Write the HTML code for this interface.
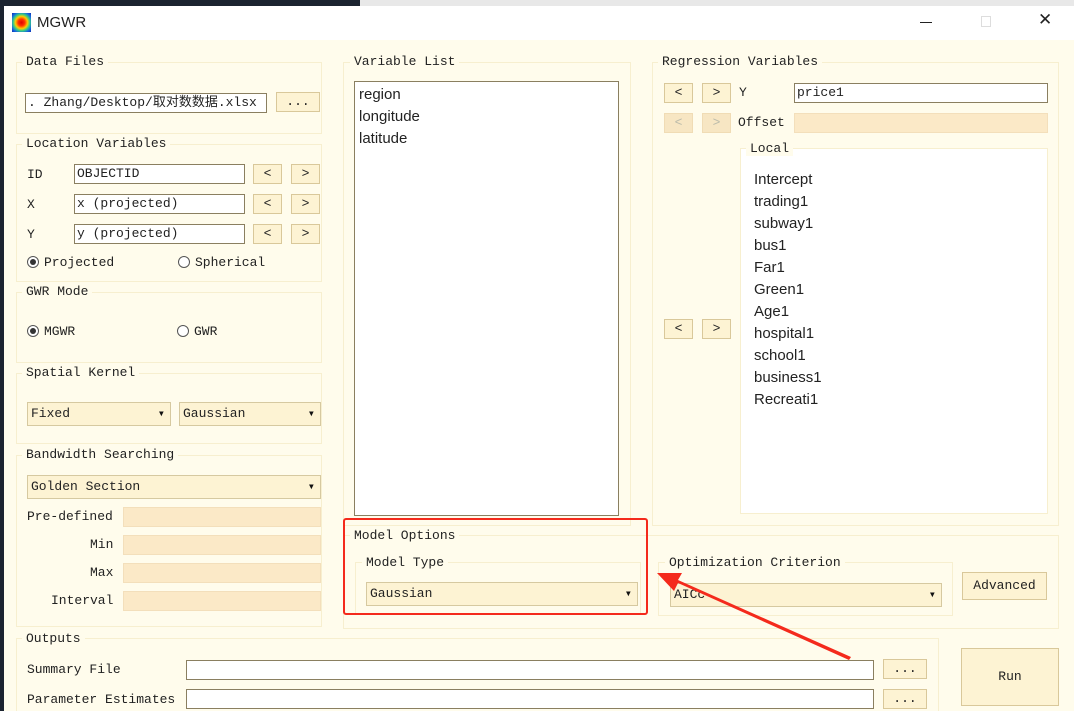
<!DOCTYPE html>
<html><head><meta charset="utf-8"><style>
*{box-sizing:border-box;margin:0;padding:0}
html,body{width:1074px;height:711px;overflow:hidden}
body{background:#1b2330;position:relative;font-family:"Liberation Mono","Noto Sans CJK SC",monospace;font-size:13px;color:#222}
.a{position:absolute}
.win{left:4px;top:6px;width:1070px;height:705px;background:#fffcec}
.tb{left:4px;top:6px;width:1070px;height:34px;background:#fff}
.grp{position:absolute;border:1px solid #f7efcf}
.lg{position:absolute;background:#fffcec;padding:0 4px;font-size:13px;line-height:14px;white-space:nowrap}
.in{position:absolute;background:#fff;border:1px solid #8a7f60;height:20px;font-size:13px;line-height:18px;padding-left:2px;white-space:nowrap;overflow:hidden}
.dis{position:absolute;background:#fbe9c7;border:1px solid #f3dfbb;height:20px}
.bt{position:absolute;background:#fdf3d3;border:1px solid #d9c89a;height:20px;text-align:center;line-height:17px;font-size:13px}
.sel{position:absolute;background:#fdf3d3;border:1px solid #d6c9a0;height:24px;line-height:22px;padding-left:3px;font-size:13px}
.sel:after{content:"▾";position:absolute;right:5px;top:0;font-size:12px;color:#111}
.t{position:absolute;font-size:13px;line-height:14px;white-space:nowrap}
.rad{display:inline-block;width:12px;height:12px;border:1px solid #555;border-radius:50%;vertical-align:-2px;margin-right:5px;position:relative;background:#fff}
.rad.on:after{content:"";position:absolute;left:2px;top:2px;width:6px;height:6px;border-radius:50%;background:#333}
.list{position:absolute;font-family:"Liberation Sans",sans-serif;font-size:15px;line-height:22px}
</style></head><body>
<div class="a" style="left:360px;top:0;width:714px;height:6px;background:#e8e8e8"></div>
<div class="a win"></div>
<div class="a tb"></div>
<div class="a" style="left:12px;top:13px;width:19px;height:19px;background:radial-gradient(circle,#d00 0,#f30 25%,#fc0 45%,#3c8 62%,#1466e0 80%,#1030b0 100%)"></div>
<div class="t" style="left:37px;top:15px;font-family:'Liberation Sans',sans-serif;font-size:15px;line-height:16px">MGWR</div>
<div class="a" style="left:920px;top:22px;width:12px;height:1px;background:#222"></div>
<div class="a" style="left:981px;top:16px;width:10px;height:11px;border:1px solid #ddd"></div>
<div class="t" style="left:1038px;top:13px;font-family:'Liberation Sans';font-size:17px">✕</div>

<div class="grp" style="left:16px;top:62px;width:306px;height:72px"></div>
<div class="lg" style="left:22px;top:55px">Data Files</div>
<div class="in" style="left:25px;top:93px;width:242px">. Zhang/Desktop/取对数数据.xlsx</div>
<div class="bt" style="left:276px;top:92px;width:44px">...</div>

<div class="grp" style="left:16px;top:144px;width:306px;height:138px"></div>
<div class="lg" style="left:22px;top:137px">Location Variables</div>
<div class="t" style="left:27px;top:168px">ID</div>
<div class="in" style="left:74px;top:164px;width:171px">OBJECTID</div>
<div class="bt" style="left:253px;top:164px;width:29px">&lt;</div><div class="bt" style="left:291px;top:164px;width:29px">&gt;</div>
<div class="t" style="left:27px;top:198px">X</div>
<div class="in" style="left:74px;top:194px;width:171px">x (projected)</div>
<div class="bt" style="left:253px;top:194px;width:29px">&lt;</div><div class="bt" style="left:291px;top:194px;width:29px">&gt;</div>
<div class="t" style="left:27px;top:228px">Y</div>
<div class="in" style="left:74px;top:224px;width:171px">y (projected)</div>
<div class="bt" style="left:253px;top:224px;width:29px">&lt;</div><div class="bt" style="left:291px;top:224px;width:29px">&gt;</div>
<div class="t" style="left:27px;top:256px"><span class="rad on"></span>Projected</div>
<div class="t" style="left:178px;top:256px"><span class="rad"></span>Spherical</div>

<div class="grp" style="left:16px;top:292px;width:306px;height:71px"></div>
<div class="lg" style="left:22px;top:285px">GWR Mode</div>
<div class="t" style="left:27px;top:325px"><span class="rad on"></span>MGWR</div>
<div class="t" style="left:177px;top:325px"><span class="rad"></span>GWR</div>

<div class="grp" style="left:16px;top:373px;width:306px;height:71px"></div>
<div class="lg" style="left:22px;top:366px">Spatial Kernel</div>
<div class="sel" style="left:27px;top:402px;width:144px">Fixed</div>
<div class="sel" style="left:179px;top:402px;width:142px">Gaussian</div>

<div class="grp" style="left:16px;top:455px;width:306px;height:172px"></div>
<div class="lg" style="left:22px;top:448px">Bandwidth Searching</div>
<div class="sel" style="left:27px;top:475px;width:294px">Golden Section</div>
<div class="t" style="left:27px;top:510px">Pre-defined</div><div class="dis" style="left:123px;top:507px;width:198px"></div>
<div class="t" style="left:90px;top:538px">Min</div><div class="dis" style="left:123px;top:535px;width:198px"></div>
<div class="t" style="left:90px;top:566px">Max</div><div class="dis" style="left:123px;top:563px;width:198px"></div>
<div class="t" style="left:51px;top:594px">Interval</div><div class="dis" style="left:123px;top:591px;width:198px"></div>

<div class="grp" style="left:343px;top:62px;width:288px;height:464px"></div>
<div class="lg" style="left:350px;top:55px">Variable List</div>
<div class="a" style="left:354px;top:81px;width:265px;height:435px;background:#fff;border:1px solid #8a7f60"></div>
<div class="list" style="left:359px;top:84px">region<br>longitude<br>latitude</div>

<div class="grp" style="left:652px;top:62px;width:407px;height:464px"></div>
<div class="lg" style="left:658px;top:55px">Regression Variables</div>
<div class="bt" style="left:664px;top:83px;width:29px">&lt;</div><div class="bt" style="left:702px;top:83px;width:29px">&gt;</div>
<div class="t" style="left:739px;top:86px">Y</div>
<div class="in" style="left:794px;top:83px;width:254px">price1</div>
<div class="bt" style="left:664px;top:113px;width:29px;background:#f7e6c3;color:#bba;border-color:#f0dcb5">&lt;</div><div class="bt" style="left:702px;top:113px;width:29px;background:#f7e6c3;color:#bba;border-color:#f0dcb5">&gt;</div>
<div class="t" style="left:738px;top:116px">Offset</div>
<div class="dis" style="left:794px;top:113px;width:254px"></div>
<div class="grp" style="left:740px;top:148px;width:308px;height:366px;background:#fff"></div>
<div class="lg" style="left:746px;top:142px">Local</div>
<div class="list" style="left:754px;top:169px">Intercept<br>trading1<br>subway1<br>bus1<br>Far1<br>Green1<br>Age1<br>hospital1<br>school1<br>business1<br>Recreati1</div>
<div class="bt" style="left:664px;top:319px;width:29px">&lt;</div><div class="bt" style="left:702px;top:319px;width:29px">&gt;</div>

<div class="grp" style="left:343px;top:535px;width:716px;height:94px"></div>
<div class="lg" style="left:350px;top:529px">Model Options</div>
<div class="grp" style="left:355px;top:562px;width:286px;height:53px"></div>
<div class="lg" style="left:362px;top:556px">Model Type</div>
<div class="sel" style="left:366px;top:582px;width:272px">Gaussian</div>
<div class="grp" style="left:658px;top:562px;width:295px;height:54px"></div>
<div class="lg" style="left:665px;top:556px">Optimization Criterion</div>
<div class="sel" style="left:670px;top:583px;width:272px">AICc</div>
<div class="bt" style="left:962px;top:572px;width:85px;height:28px;line-height:26px">Advanced</div>
<div class="a" style="left:343px;top:518px;width:305px;height:97px;border:2px solid #f42a1c;border-radius:3px"></div>

<div class="grp" style="left:16px;top:638px;width:923px;height:73px;border-bottom:none"></div>
<div class="lg" style="left:22px;top:632px">Outputs</div>
<div class="t" style="left:27px;top:663px">Summary File</div>
<div class="in" style="left:186px;top:660px;width:688px"></div>
<div class="bt" style="left:883px;top:659px;width:44px">...</div>
<div class="t" style="left:27px;top:693px">Parameter Estimates</div>
<div class="in" style="left:186px;top:689px;width:688px"></div>
<div class="bt" style="left:883px;top:689px;width:44px">...</div>
<div class="bt" style="left:961px;top:648px;width:98px;height:58px;line-height:56px">Run</div>

<svg class="a" style="left:0;top:0" width="1074" height="711"><polygon points="849,660 678,583 674,591 657,573 682,573 678,580 851,657" fill="#f42a1c"/></svg>
</body></html>
